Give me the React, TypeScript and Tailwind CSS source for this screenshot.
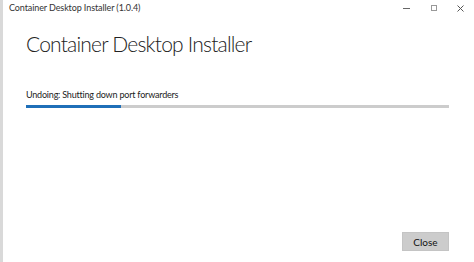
import React from 'react';

export default function App() {
  return (
    <div className="flex w-[474px] h-[262px] bg-white overflow-hidden" style={{ fontFamily: 'Lato, "Noto Sans", "Liberation Sans", sans-serif' }}>
      {/* strip of the window behind */}
      <div className="w-[3px] h-full bg-[#d9d9d9]" />

      <div className="flex-1 flex flex-col">
        {/* title bar */}
        <div className="flex items-start h-[26px] pl-[6px] pt-[3px]">
          <span className="text-[9px] text-[#333] leading-[10px] tracking-[-0.1px]">Container Desktop Installer (1.0.4)</span>
          <div className="ml-auto flex items-center h-[10px]">
            <div className="w-[27px] flex justify-center">
              <div className="w-[7px] h-px bg-[#666]" />
            </div>
            <div className="w-[27px] flex justify-center">
              <div className="w-[6px] h-[6px] border border-[#999]" />
            </div>
            <div className="w-[27px] flex justify-center">
              <svg width="7" height="7" viewBox="0 0 7 7">
                <path d="M0.5 0.5 L6.5 6.5 M6.5 0.5 L0.5 6.5" stroke="#555" strokeWidth="1" />
              </svg>
            </div>
          </div>
        </div>

        {/* body */}
        <div className="flex-1 flex flex-col px-[23px]">
          <h1 className="text-[21px] font-light text-[#222] leading-none mt-[7px] tracking-[-0.8px]">Container Desktop Installer</h1>
          <div className="mt-[36px] text-[9px] text-[#222] leading-none tracking-[-0.2px]">Undoing: Shutting down port forwarders</div>
          <div className="mt-[6px] h-[3px] w-[423px] bg-[#cccccc]">
            <div className="h-full bg-[#1f6fb8]" style={{ width: '22.5%' }} />
          </div>
          <div className="flex-1" />
          <div className="flex justify-end mb-[11px] mr-[2px]">
            <button className="w-[47px] h-[19px] bg-[#cccccc] border border-[#c4c4c4] text-[10px] text-[#111] leading-none">Close</button>
          </div>
        </div>
      </div>
    </div>
  );
}
